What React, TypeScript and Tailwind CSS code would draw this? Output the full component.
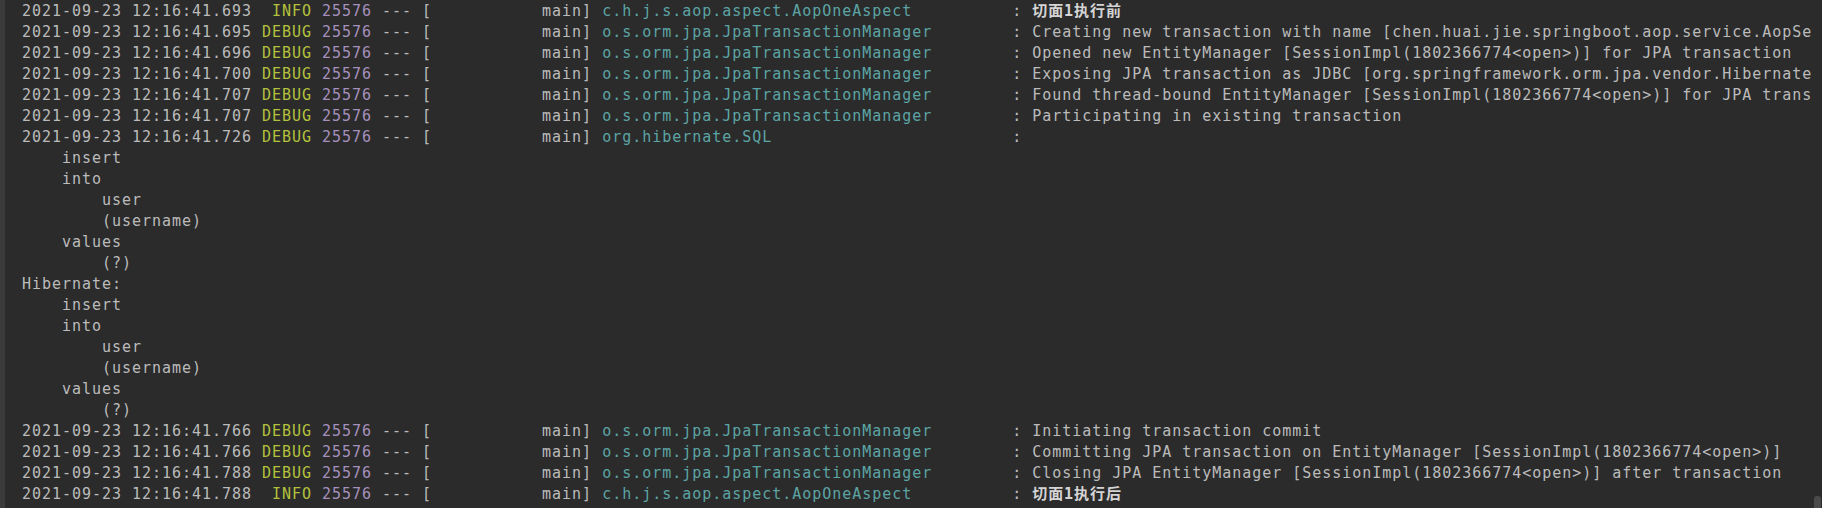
const C = {
  text: "text-[#bbbbbb]",
  level: "text-[#b4c13c]",
  pid: "text-[#a690bd]",
  logger: "text-[#5ca4a4]",
};

type LogLine = {
  time: string;
  level: "INFO" | "DEBUG";
  logger: string;
  msg: string;
  cjk?: boolean;
};

function pad(s: string, n: number) {
  return s.length >= n ? s.slice(0, n) : s + " ".repeat(n - s.length);
}

function Entry({ line }: { line: LogLine }) {
  const lvl = line.level === "INFO" ? " INFO" : "DEBUG";
  return (
    <div>
      <span>{line.time} </span>
      <span className={C.level}>{lvl}</span>{" "}
      <span className={C.pid}>25576</span>
      <span>{" --- [           main] "}</span>
      <span className={C.logger}>{pad(line.logger, 40)}</span>
      <span> : </span>
      {line.cjk ? (
        <span className="font-semibold text-[#d4d4d4]">{line.msg}</span>
      ) : (
        <span>{line.msg}</span>
      )}
    </div>
  );
}

const TX = "o.s.orm.jpa.JpaTransactionManager";
const ASPECT = "c.h.j.s.aop.aspect.AopOneAspect";
const SESSION = "SessionImpl(1802366774<open>)";

// the console pane is narrower than these messages, so they stop where the pane edge cuts them
const head: LogLine[] = [
  { time: "2021-09-23 12:16:41.693", level: "INFO", logger: ASPECT, msg: "切面1执行前", cjk: true },
  { time: "2021-09-23 12:16:41.695", level: "DEBUG", logger: TX, msg: "Creating new transaction with name [chen.huai.jie.springboot.aop.service.AopSe" },
  { time: "2021-09-23 12:16:41.696", level: "DEBUG", logger: TX, msg: `Opened new EntityManager [${SESSION}] for JPA transaction` },
  { time: "2021-09-23 12:16:41.700", level: "DEBUG", logger: TX, msg: "Exposing JPA transaction as JDBC [org.springframework.orm.jpa.vendor.Hibernate" },
  { time: "2021-09-23 12:16:41.707", level: "DEBUG", logger: TX, msg: `Found thread-bound EntityManager [${SESSION}] for JPA trans` },
  { time: "2021-09-23 12:16:41.707", level: "DEBUG", logger: TX, msg: "Participating in existing transaction" },
  { time: "2021-09-23 12:16:41.726", level: "DEBUG", logger: "org.hibernate.SQL", msg: "" },
];

const tail: LogLine[] = [
  { time: "2021-09-23 12:16:41.766", level: "DEBUG", logger: TX, msg: "Initiating transaction commit" },
  { time: "2021-09-23 12:16:41.766", level: "DEBUG", logger: TX, msg: `Committing JPA transaction on EntityManager [${SESSION}]` },
  { time: "2021-09-23 12:16:41.788", level: "DEBUG", logger: TX, msg: `Closing JPA EntityManager [${SESSION}] after transaction` },
  { time: "2021-09-23 12:16:41.788", level: "INFO", logger: ASPECT, msg: "切面1执行后", cjk: true },
];

const sql = ["    insert", "    into", "        user", "        (username)", "    values", "        (?)"];

export default function App() {
  return (
    <div className="relative flex h-[508px] w-[1822px] overflow-hidden bg-[#2b2b2b]">
      <div className="w-[5px] shrink-0 bg-[#3b3b3b]" />
      <div
        className={`min-w-0 flex-1 overflow-hidden whitespace-pre pl-[17px] pt-[1px] text-[15px] leading-[21px] tracking-[0.97px] ${C.text}`}
        style={{ fontFamily: '"DejaVu Sans Mono", "Noto Sans CJK SC", monospace' }}
      >
        {head.map((l, i) => (
          <Entry key={"h" + i} line={l} />
        ))}
        {sql.map((s, i) => (
          <div key={"a" + i}>{s}</div>
        ))}
        <div>Hibernate: </div>
        {sql.map((s, i) => (
          <div key={"b" + i}>{s}</div>
        ))}
        {tail.map((l, i) => (
          <Entry key={"t" + i} line={l} />
        ))}
      </div>
      <div className="w-[6px] shrink-0" />
      <div className="absolute bottom-0 right-[1px] h-[12px] w-[7px] rounded-t-[3px] bg-[#4a4a4a]" />
    </div>
  );
}
